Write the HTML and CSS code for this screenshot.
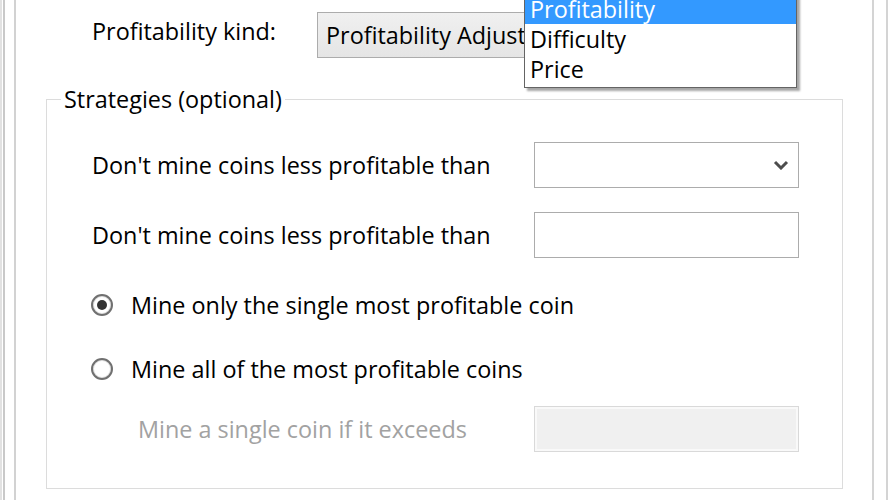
FILE: index.html
```html
<!DOCTYPE html>
<html>
<head>
<meta charset="utf-8">
<link rel="stylesheet" href="styles.css">
</head>
<body>
<div class="window">
  <div class="edge-l"></div>
  <div class="content">
    <div class="kind-row">
      <span class="kind-label">Profitability kind:</span>
      <div class="combo combo-gray"><span class="combo-text">Profitability Adjusted</span></div>
    </div>
    <ul class="popup">
      <li class="item selected">Profitability</li>
      <li class="item">Difficulty</li>
      <li class="item">Price</li>
    </ul>
    <fieldset class="group">
      <legend class="legend">Strategies (optional)</legend>
      <div class="row row-first">
        <span class="label">Don't mine coins less profitable than</span>
        <div class="field combo-white">
          <svg class="chev" width="16" height="10" viewBox="0 0 16 10"><polyline points="2,2 8,8 14,2" fill="none" stroke="#4d4d4d" stroke-width="3"/></svg>
        </div>
      </div>
      <div class="row row-second">
        <span class="label">Don't mine coins less profitable than</span>
        <div class="field"></div>
      </div>
      <label class="radio-row radio-first">
        <span class="radio checked"><span class="dot"></span></span>
        <span class="radio-text">Mine only the single most profitable coin</span>
      </label>
      <label class="radio-row radio-second">
        <span class="radio"></span>
        <span class="radio-text">Mine all of the most profitable coins</span>
      </label>
      <div class="row row-disabled">
        <span class="label label-disabled">Mine a single coin if it exceeds</span>
        <div class="field field-disabled"></div>
      </div>
    </fieldset>
  </div>
  <div class="edge-r"></div>
</div>
</body>
</html>
```
FILE: styles.css
```css
html, body {
  margin: 0;
  padding: 0;
  background: #ffffff;
}
body {
  width: 888px;
  height: 500px;
  overflow: hidden;
  font-family: "Open Sans", "Noto Sans", sans-serif;
  font-size: 23.4px;
  color: #000;
}
.window {
  display: flex;
  width: 888px;
  height: 500px;
}
.edge-l {
  flex: none;
  width: 17px;
  background: linear-gradient(to right, #e2e2e2 0 2px, #fff 2px 3px, #c9c9c9 3px 5px, #fff 5px 14px, #d2d2d2 14px 16px, #fff 16px);
}
.edge-r {
  flex: none;
  width: 18px;
  background: linear-gradient(to right, #fff 0 2px, #d4d4d4 2px 4px, #fff 4px 16px, #d4d4d4 16px 18px);
}
.content {
  flex: 1;
  position: relative;
  min-width: 0;
}
.kind-row {
  display: flex;
  align-items: center;
  margin-top: 12px;
  height: 46px;
  padding-left: 75px;
}
.kind-label {
  width: 225px;
  flex: none;
  margin-top: -8px;
  white-space: nowrap;
}
.combo {
  box-sizing: border-box;
  height: 46px;
  width: 480px;
  border: 1px solid #acacac;
  display: flex;
  align-items: center;
  padding-left: 8px;
  white-space: nowrap;
  overflow: hidden;
}
.combo-text {
  display: block;
  width: 198px;
  overflow: hidden;
  white-space: nowrap;
}
.combo-gray {
  background: linear-gradient(#f0f0f0, #e5e5e5);
}
.popup {
  position: absolute;
  left: 507px;
  top: -7px;
  width: 273px;
  box-sizing: border-box;
  margin: 0;
  padding: 0 0 3px;
  list-style: none;
  background: #fff;
  border: 1px solid #646464;
  box-shadow: 3px 3px 2px rgba(0, 0, 0, 0.35);
}
.item {
  height: 30px;
  line-height: 30px;
  padding-left: 5px;
  white-space: nowrap;
}
.item.selected {
  background: #3399ff;
  color: #fff;
}
.group {
  margin: 26px 27px 0 29px;
  padding: 0 0 36px;
  border: 1px solid #dcdcdc;
  min-width: 0;
}
.legend {
  margin-left: 14px;
  padding: 0 3px;
  line-height: 30px;
}
.row {
  display: grid;
  grid-template-columns: 487px 265px;
  align-items: center;
}
.row-first { margin-top: 28px; }
.row-second { margin-top: 24px; }
.row-disabled { margin-top: 22px; }
.label {
  padding-left: 45px;
  white-space: nowrap;
}
.label-disabled {
  padding-left: 91px;
  color: #a2a2a2;
}
.field {
  box-sizing: border-box;
  height: 46px;
  border: 1px solid #acacac;
  background: #fff;
  display: flex;
  align-items: center;
  justify-content: flex-end;
  padding-right: 9px;
}
.field-disabled {
  border: 1px solid #d9d9d9;
  background: #f0f0f0;
  box-shadow: inset 0 0 0 2px #f9f9f9;
}
.chev {
  display: block;
}
.radio-row {
  display: flex;
  align-items: center;
  height: 30px;
  padding-left: 44px;
}
.radio-first { margin-top: 32px; }
.radio-second { margin-top: 34px; }
.radio {
  box-sizing: border-box;
  flex: none;
  width: 22px;
  height: 22px;
  border: 2px solid #707070;
  border-radius: 50%;
  background: #fff;
  box-shadow: inset 0 0 0 1px #dedede;
  display: flex;
  align-items: center;
  justify-content: center;
  margin-right: 18px;
}
.dot {
  width: 10px;
  height: 10px;
  border-radius: 50%;
  background: #333;
}
```
